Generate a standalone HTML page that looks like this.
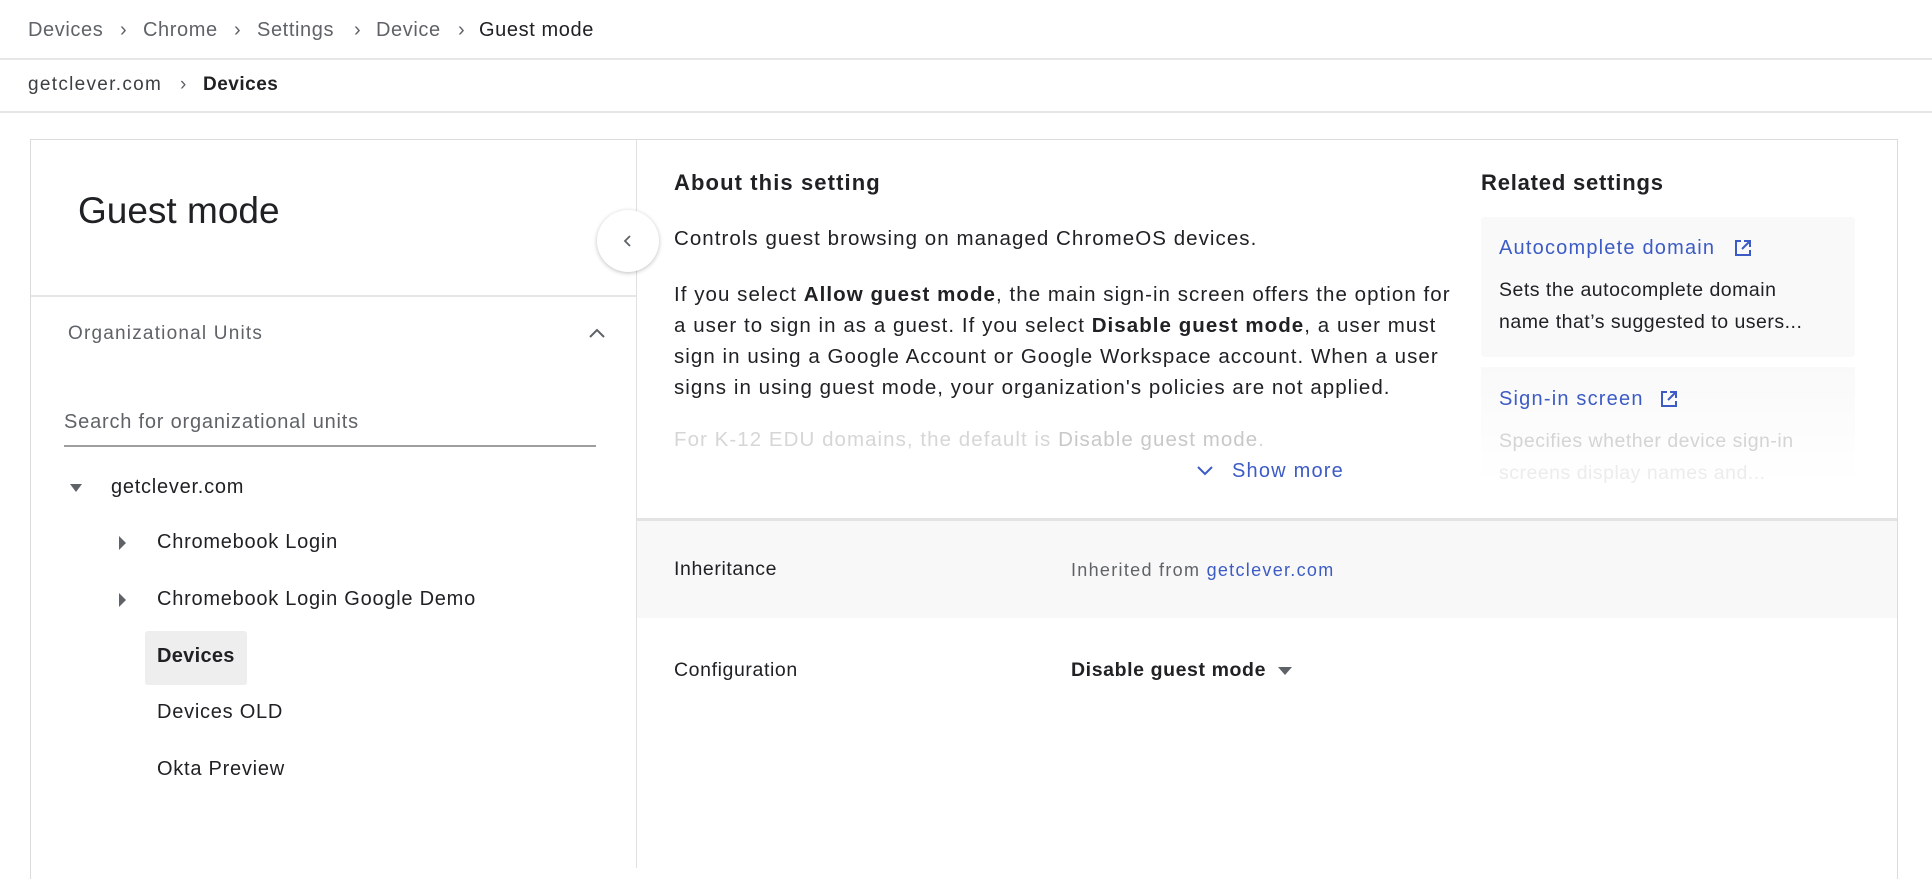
<!DOCTYPE html>
<html><head><meta charset="utf-8"><style>
*{margin:0;padding:0;box-sizing:border-box}
body{width:1932px;height:868px;overflow:hidden;background:#fff;font-family:"Liberation Sans",Arial,sans-serif;color:#202124;position:relative}
.a{position:absolute;white-space:nowrap}
.g{color:#5f6368}
.b{font-weight:bold}
.blue{color:#3c5bc4}
.t{font-size:20px;letter-spacing:0.75px}
</style></head><body>
<div class="a g" style="left:28px;top:19px;font-size:20px;letter-spacing:0.6px">Devices</div>
<div class="a g" style="left:120px;top:19px;font-size:20px">›</div>
<div class="a g" style="left:143px;top:19px;font-size:20px;letter-spacing:0.6px">Chrome</div>
<div class="a g" style="left:234px;top:19px;font-size:20px">›</div>
<div class="a g" style="left:257px;top:19px;font-size:20px;letter-spacing:0.6px">Settings</div>
<div class="a g" style="left:354px;top:19px;font-size:20px">›</div>
<div class="a g" style="left:376px;top:19px;font-size:20px;letter-spacing:0.6px">Device</div>
<div class="a g" style="left:458px;top:19px;font-size:20px">›</div>
<div class="a" style="left:479px;top:19px;font-size:20px;letter-spacing:0.6px">Guest mode</div>
<div class="a" style="left:0;top:58px;width:1932px;height:2px;background:#e6e6e6"></div>
<div class="a" style="left:28px;top:74px;font-size:19px;letter-spacing:1.3px;color:#3c4043">getclever.com</div>
<div class="a g" style="left:180px;top:74px;font-size:19px">›</div>
<div class="a b" style="left:203px;top:74px;font-size:19px;letter-spacing:0.5px">Devices</div>
<div class="a" style="left:0;top:111px;width:1932px;height:2px;background:#e6e6e6"></div>

<div class="a" style="left:30px;top:139px;width:1868px;height:740px;border:1px solid #dcdcdc;border-bottom:none"></div>
<div class="a" style="left:636px;top:139px;width:1px;height:729px;background:#e0e0e0"></div>
<div class="a" style="left:78px;top:190px;font-size:37px;color:#202124">Guest mode</div>
<div class="a" style="left:31px;top:295px;width:605px;height:2px;background:#e6e6e6"></div>
<div class="a" style="left:597px;top:210px;width:62px;height:62px;border-radius:50%;background:#fff;box-shadow:0 1px 4px rgba(0,0,0,.25)"></div>
<svg class="a" style="left:620px;top:233px" width="16" height="16" viewBox="0 0 16 16"><path d="M10 3L5 8l5 5" fill="none" stroke="#5f6368" stroke-width="1.8"/></svg>

<div class="a g" style="left:68px;top:323px;font-size:19px;letter-spacing:1.2px">Organizational Units</div>
<svg class="a" style="left:587px;top:325px" width="20" height="16" viewBox="0 0 20 16"><path d="M3 12l7-7 7 7" fill="none" stroke="#5f6368" stroke-width="2"/></svg>
<div class="a g" style="left:64px;top:411px;font-size:20px;letter-spacing:0.8px">Search for organizational units</div>
<div class="a" style="left:64px;top:445px;width:532px;height:2px;background:#9e9e9e"></div>

<svg class="a" style="left:69px;top:482px" width="14" height="12"><path d="M1 2h12l-6 8z" fill="#5f6368"/></svg>
<div class="a t" style="left:111px;top:476px">getclever.com</div>
<svg class="a" style="left:117px;top:535px" width="10" height="16"><path d="M2 1v14l7-7z" fill="#5f6368"/></svg>
<div class="a t" style="left:157px;top:531px">Chromebook Login</div>
<svg class="a" style="left:117px;top:592px" width="10" height="16"><path d="M2 1v14l7-7z" fill="#5f6368"/></svg>
<div class="a t" style="left:157px;top:588px">Chromebook Login Google Demo</div>
<div class="a" style="left:145px;top:631px;width:102px;height:54px;background:#eeeeee;border-radius:3px"></div>
<div class="a b" style="left:157px;top:645px;font-size:20px;letter-spacing:0.3px">Devices</div>
<div class="a t" style="left:157px;top:701px">Devices OLD</div>
<div class="a t" style="left:157px;top:758px">Okta Preview</div>

<div class="a" style="left:674px;top:170px;font-size:22px;font-weight:bold;letter-spacing:1.1px;color:#202124">About this setting</div>
<div style="position:absolute;left:674px;top:223px;white-space:nowrap;font-size:20.5px;letter-spacing:1.05px;line-height:31px;color:#202124">
<div>Controls guest browsing on managed ChromeOS devices.</div>
<div style="margin-top:25px">If you select <b>Allow guest mode</b>, the main sign-in screen offers the option for<br>a user to sign in as a guest. If you select <b>Disable guest mode</b>, a user must<br>sign in using a Google Account or Google Workspace account. When a user<br>signs in using guest mode, your organization's policies are not applied.</div>
<div style="margin-top:21px;color:#d6d6d6">For K-12 EDU domains, the default is <span style="color:#c8c8c8">Disable guest mode</span>.</div>
</div>
<svg class="a" style="left:1196px;top:464px" width="18" height="14"><path d="M2 3l7 7 7-7" fill="none" stroke="#3c5bc4" stroke-width="2"/></svg>
<div class="a blue" style="left:1232px;top:460px;font-size:20px;letter-spacing:1.2px">Show more</div>

<div class="a" style="left:1481px;top:170px;font-size:22px;font-weight:bold;letter-spacing:0.8px">Related settings</div>
<div class="a" style="left:1481px;top:217px;width:374px;height:140px;background:#f9f9fa;border-radius:4px"></div>
<div class="a blue" style="left:1499px;top:237px;font-size:20px;letter-spacing:1.2px">Autocomplete domain</div>
<svg class="a" style="left:1733px;top:238px" width="20" height="20" viewBox="0 0 20 20"><path d="M8 3H3v14h14v-5M11 3h6v6M17 3l-8 8" fill="none" stroke="#3c5bc4" stroke-width="2"/></svg>
<div class="a" style="left:1499px;top:274px;font-size:19.5px;letter-spacing:0.5px;line-height:32px">Sets the autocomplete domain<br>name that’s suggested to users...</div>
<div class="a" style="left:1481px;top:367px;width:374px;height:115px;background:linear-gradient(#f9f9fa,#fff)"></div>
<div class="a blue" style="left:1499px;top:388px;font-size:20px;letter-spacing:1.2px">Sign-in screen</div>
<svg class="a" style="left:1659px;top:389px" width="20" height="20" viewBox="0 0 20 20"><path d="M8 3H3v14h14v-5M11 3h6v6M17 3l-8 8" fill="none" stroke="#3c5bc4" stroke-width="2"/></svg>
<div class="a" style="left:1499px;top:425px;font-size:19.5px;letter-spacing:0.5px;line-height:32px;color:#d4d4d4">Specifies whether device sign-in<br><span style="color:#ececec">screens display names and...</span></div>

<div class="a" style="left:637px;top:518px;width:1260px;height:3px;background:#e3e3e3"></div>
<div class="a" style="left:637px;top:521px;width:1260px;height:97px;background:#f8f8f8"></div>
<div class="a" style="left:674px;top:558px;font-size:19.5px;letter-spacing:0.6px">Inheritance</div>
<div class="a" style="left:1071px;top:560px;font-size:18px;letter-spacing:1.3px;color:#5f6368">Inherited from <span class="blue">getclever.com</span></div>
<div class="a" style="left:674px;top:659px;font-size:19.5px;letter-spacing:0.6px">Configuration</div>
<div class="a b" style="left:1071px;top:659px;font-size:19.5px;letter-spacing:0.6px">Disable guest mode</div>
<svg class="a" style="left:1277px;top:665px" width="16" height="12"><path d="M1 2h14l-7 8z" fill="#5f6368"/></svg>
</body></html>
